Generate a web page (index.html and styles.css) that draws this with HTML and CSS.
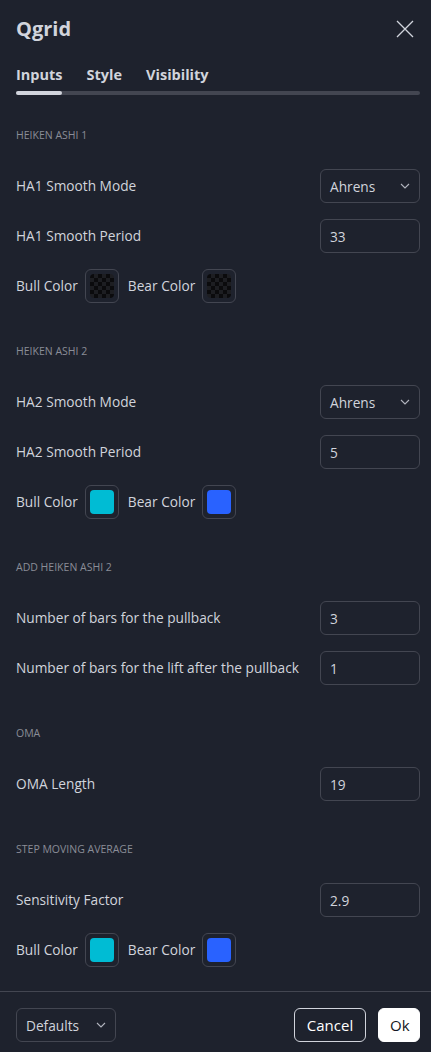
FILE: index.html
```html
<!DOCTYPE html>
<html>
<head>
<meta charset="utf-8">
<link rel="stylesheet" href="styles.css">
</head>
<body>
<div class="dialog">
  <div class="header">
    <div class="title">Qgrid</div>
    <svg class="close" width="18" height="18" viewBox="0 0 18 18"><path d="M1 1L17 17M17 1L1 17" stroke="#d1d4dc" stroke-width="1.3" fill="none"/></svg>
  </div>
  <div class="tabs">
    <div class="tab-list">
      <span class="tab active">Inputs</span>
      <span class="tab">Style</span>
      <span class="tab">Visibility</span>
    </div>
    <div class="track"><div class="track-active"></div></div>
  </div>
  <div class="content">
    <div class="section">
      <div class="section-title">HEIKEN ASHI 1</div>
      <div class="row"><span class="label">HA1 Smooth Mode</span>
        <div class="select">Ahrens<svg class="chev" width="10" height="6" viewBox="0 0 10 6"><path d="M1 1L5 5L9 1" stroke="#b2b5be" stroke-width="1.1" fill="none"/></svg></div></div>
      <div class="row"><span class="label">HA1 Smooth Period</span><div class="input">33</div></div>
      <div class="row colors"><span class="label">Bull Color</span><span class="swatch"><span class="fill checker"></span></span><span class="label">Bear Color</span><span class="swatch"><span class="fill checker"></span></span></div>
    </div>
    <div class="section">
      <div class="section-title">HEIKEN ASHI 2</div>
      <div class="row"><span class="label">HA2 Smooth Mode</span>
        <div class="select">Ahrens<svg class="chev" width="10" height="6" viewBox="0 0 10 6"><path d="M1 1L5 5L9 1" stroke="#b2b5be" stroke-width="1.1" fill="none"/></svg></div></div>
      <div class="row"><span class="label">HA2 Smooth Period</span><div class="input">5</div></div>
      <div class="row colors"><span class="label">Bull Color</span><span class="swatch"><span class="fill cyan"></span></span><span class="label">Bear Color</span><span class="swatch"><span class="fill blue"></span></span></div>
    </div>
    <div class="section">
      <div class="section-title">ADD HEIKEN ASHI 2</div>
      <div class="row"><span class="label">Number of bars for the pullback</span><div class="input">3</div></div>
      <div class="row"><span class="label">Number of bars for the lift after the pullback</span><div class="input">1</div></div>
    </div>
    <div class="section">
      <div class="section-title">OMA</div>
      <div class="row"><span class="label">OMA Length</span><div class="input">19</div></div>
    </div>
    <div class="section">
      <div class="section-title">STEP MOVING AVERAGE</div>
      <div class="row"><span class="label">Sensitivity Factor</span><div class="input">2.9</div></div>
      <div class="row colors"><span class="label">Bull Color</span><span class="swatch"><span class="fill cyan"></span></span><span class="label">Bear Color</span><span class="swatch"><span class="fill blue"></span></span></div>
    </div>
  </div>
  <div class="footer">
    <div class="select defaults">Defaults<svg class="chev" width="10" height="6" viewBox="0 0 10 6"><path d="M1 1L5 5L9 1" stroke="#b2b5be" stroke-width="1.1" fill="none"/></svg></div>
    <div class="buttons">
      <button class="btn cancel">Cancel</button>
      <button class="btn ok">Ok</button>
    </div>
  </div>
</div>
</body>
</html>
```
FILE: styles.css
```css
* { box-sizing: border-box; }
html, body { margin: 0; padding: 0; }
body {
  background: #1e222d;
  color: #d1d4dc;
  font-family: "Open Sans", "Noto Sans", sans-serif;
  font-size: 13.7px;
}
.dialog {
  height: 100vh;
  display: flex;
  flex-direction: column;
  overflow: hidden;
}
.header {
  height: 58px;
  display: flex;
  align-items: center;
  justify-content: space-between;
  padding: 0 17px 0 16px;
}
.title {
  font-size: 20px;
  font-weight: 700;
  line-height: 24px;
}
.close { display: block; }
.tabs { padding: 0 11px 0 16px; }
.tab-list {
  display: flex;
  gap: 24px;
  height: 33px;
  align-items: center;
}
.tab {
  font-size: 14.5px;
  font-weight: 700;
  line-height: 20px;
}
.track {
  height: 4px;
  background: #434651;
  border-radius: 2px;
}
.track-active {
  width: 46px;
  height: 4px;
  background: #d1d4dc;
  border-radius: 2px;
}
.content {
  flex: 1;
  overflow: hidden;
  padding: 32px 11px 0 16px;
  display: flex;
  flex-direction: column;
  gap: 40px;
}
.section {
  display: flex;
  flex-direction: column;
  gap: 16px;
}
.section-title {
  font-size: 10.5px;
  line-height: 16px;
  color: #8a8d97;
  margin-bottom: 10px;
}
.row {
  height: 34px;
  display: flex;
  align-items: center;
  justify-content: space-between;
}
.row.colors { justify-content: flex-start; }
.label {
  font-weight: 500;
  line-height: 20px;
}
.select, .input {
  width: 100px;
  height: 34px;
  border: 1px solid #434651;
  border-radius: 6px;
  padding: 0 9px;
  display: flex;
  align-items: center;
  justify-content: space-between;
}
.chev { display: block; margin-right: 0; }
.swatch {
  width: 34px;
  height: 34px;
  border: 1px solid #434651;
  border-radius: 6px;
  padding: 4px;
  margin: 0 9px 0 7px;
  display: block;
}
.fill {
  display: block;
  width: 100%;
  height: 100%;
  border-radius: 4px;
}
.checker {
  background-color: #0b0b0d;
  background-image:
    linear-gradient(45deg, #1d1e22 25%, transparent 25%, transparent 75%, #1d1e22 75%),
    linear-gradient(45deg, #1d1e22 25%, transparent 25%, transparent 75%, #1d1e22 75%);
  background-size: 8px 8px;
  background-position: 0 0, 4px 4px;
}
.cyan { background: #00bcd4; }
.blue { background: #2962ff; }
.footer {
  height: 61px;
  border-top: 1px solid #434651;
  padding: 16px 11px 10px 16px;
  display: flex;
  justify-content: space-between;
  align-items: flex-start;
}
.defaults { width: 100px; }
.buttons { display: flex; gap: 12px; }
.btn {
  height: 34px;
  border-radius: 6px;
  font-family: inherit;
  font-size: 15px;
  font-weight: 500;
  padding: 0 11px;
  cursor: pointer;
}
.cancel {
  background: transparent;
  border: 1px solid #d1d4dc;
  color: #ffffff;
  width: 72px;
}
.ok {
  background: #ffffff;
  border: 1px solid #ffffff;
  color: #131722;
  width: 42px;
}
```
